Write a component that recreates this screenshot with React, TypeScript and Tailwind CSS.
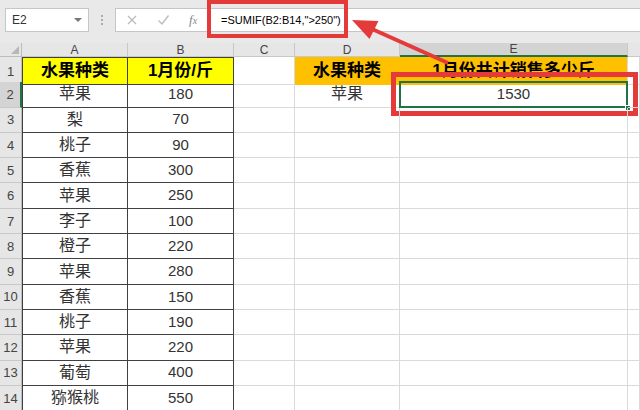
import React from "react";

const font = "[font-family:'Liberation_Sans','Noto_Sans_CJK_SC',sans-serif]";
const cols = "grid grid-cols-[22px_106px_106px_61px_105px_228px_12px]";

const data: [string, string][] = [
  ["苹果", "180"],
  ["梨", "70"],
  ["桃子", "90"],
  ["香蕉", "300"],
  ["苹果", "250"],
  ["李子", "100"],
  ["橙子", "220"],
  ["苹果", "280"],
  ["香蕉", "150"],
  ["桃子", "190"],
  ["苹果", "220"],
  ["葡萄", "400"],
  ["猕猴桃", "550"],
];

function Cell({ className = "", children }: { className?: string; children?: React.ReactNode }) {
  return (
    <div className={`relative flex items-center justify-center border-r border-b ${className}`}>
      {children}
    </div>
  );
}

function RowHead({ n, active }: { n: number; active?: boolean }) {
  return (
    <div
      className={`flex items-end justify-center pb-[2px] text-[13px] text-[#444] border-b border-[#c8c8c8] ${
        active ? "bg-[#d4d4d4] border-r-2 border-r-[#217346]" : "bg-[#e6e6e6] border-r border-r-[#bdbdbd]"
      }`}
    >
      {n}
    </div>
  );
}

export default function App() {
  const rows: React.ReactNode[] = [];

  // row 1
  rows.push(
    <div key={1} className={`${cols} h-[25.3px]`}>
      <RowHead n={1} />
      <Cell className="bg-[#ffff00] border-[#404040] border-l border-t font-bold text-[17px] text-black">水果种类</Cell>
      <Cell className="bg-[#ffff00] border-[#404040] border-t font-bold text-[17px] text-black">1月份/斤</Cell>
      <Cell className="border-[#dadada]" />
      <Cell className="bg-[#ffc000] border-[#ffc000] font-bold text-[17px] text-black">水果种类</Cell>
      <Cell className="bg-[#ffc000] border-[#dadada] border-b-[#ffc000] font-bold text-[17px] text-black">
        1月份共计销售多少斤
      </Cell>
      <Cell className="border-[#dadada]" />
    </div>
  );

  data.forEach(([name, qty], i) => {
    const n = i + 2;
    rows.push(
      <div key={n} className={`${cols} h-[25.3px]`}>
        <RowHead n={n} active={n === 2} />
        <Cell className="border-[#404040] border-l text-[16px] text-[#333]">{name}</Cell>
        <Cell className="border-[#404040] text-[15px] text-[#333]">{qty}</Cell>
        <Cell className="border-[#dadada]" />
        <Cell className="border-[#dadada] text-[16px] text-[#333]">{n === 2 ? "苹果" : ""}</Cell>
        <Cell className="border-[#dadada] text-[15px] text-[#333]">
          {n === 2 && (
            <>
              1530
              <div className="absolute inset-[-1px] border-2 border-[#217346]" />
              <div className="absolute right-[-4px] bottom-[-4px] w-[6px] h-[6px] bg-[#217346] border border-white" />
              <div className="absolute left-[-9px] right-[-11px] top-[-10px] bottom-[-9px] border-[5px] border-[#e53a3a]" />
            </>
          )}
        </Cell>
        <Cell className="border-[#dadada]" />
      </div>
    );
  });

  return (
    <div className={`relative w-[640px] h-[410px] overflow-hidden bg-white ${font}`}>
      {/* toolbar */}
      <div className="h-[43px] bg-[#e9e9e9] flex items-start pt-[8px]">
        <div className="ml-[5px] w-[84px] h-[24px] bg-white border border-[#c6c6c6] flex items-center justify-between px-[6px] text-[12px] text-[#333]">
          <span>E2</span>
          <span className="w-0 h-0 border-l-[4px] border-r-[4px] border-t-[4px] border-l-transparent border-r-transparent border-t-[#777]" />
        </div>
        <div className="w-[26px] h-[24px] flex flex-col items-center justify-center gap-[2px]">
          <span className="w-[2px] h-[2px] bg-[#aaa]" />
          <span className="w-[2px] h-[2px] bg-[#aaa]" />
          <span className="w-[2px] h-[2px] bg-[#aaa]" />
        </div>
        <div className="flex-1 h-[24px] bg-white border border-[#c6c6c6] border-r-0 flex items-center text-[#b5b5b5]">
          <svg className="ml-[10px]" width="12" height="12" viewBox="0 0 12 12">
            <path d="M2 2 L10 10 M10 2 L2 10" stroke="#bbb" strokeWidth="1.3" />
          </svg>
          <svg className="ml-[19px]" width="13" height="12" viewBox="0 0 13 12">
            <path d="M1.5 6.5 L5 10 L11.5 1.5" stroke="#bbb" strokeWidth="1.4" fill="none" />
          </svg>
          <span className="ml-[19px] italic text-[13px] [font-family:'Liberation_Serif',serif] text-[#888]">
            f<span className="text-[10px]">x</span>
          </span>
          <span className="ml-[24px] text-[11px] text-black">=SUMIF(B2:B14,"&gt;250")</span>
        </div>
      </div>

      {/* column headers */}
      <div className={`${cols} h-[14px] text-[12px] text-[#444]`}>
        <div className="relative bg-[#e6e6e6] border-r border-b border-[#bdbdbd]">
          <svg className="absolute right-[2px] bottom-[2px]" width="8" height="8" viewBox="0 0 8 8">
            <path d="M8 0 L8 8 L0 8 Z" fill="#b8b8b8" />
          </svg>
        </div>
        {["A", "B", "C", "D"].map((c) => (
          <div key={c} className="bg-[#e6e6e6] border-r border-b border-[#c8c8c8] flex items-center justify-center leading-none">
            {c}
          </div>
        ))}
        <div className="bg-[#d3d3d3] border-r border-[#c8c8c8] border-b-2 border-b-[#217346] flex items-center justify-center leading-none">
          E
        </div>
        <div className="bg-[#e6e6e6] border-b border-[#c8c8c8]" />
      </div>

      {rows}

      {/* formula red box */}
      <div className="absolute left-[207px] top-0 w-[141px] h-[38px] border-[4px] border-[#e53a3a]" />

      {/* arrow */}
      <svg className="absolute left-0 top-0 pointer-events-none" width="640" height="410">
        <line x1="448" y1="63" x2="372" y2="29" stroke="#e53a3a" strokeWidth="4" />
        <path d="M352 20 L378.5 21 L369.5 39 Z" fill="#e53a3a" />
      </svg>
    </div>
  );
}
